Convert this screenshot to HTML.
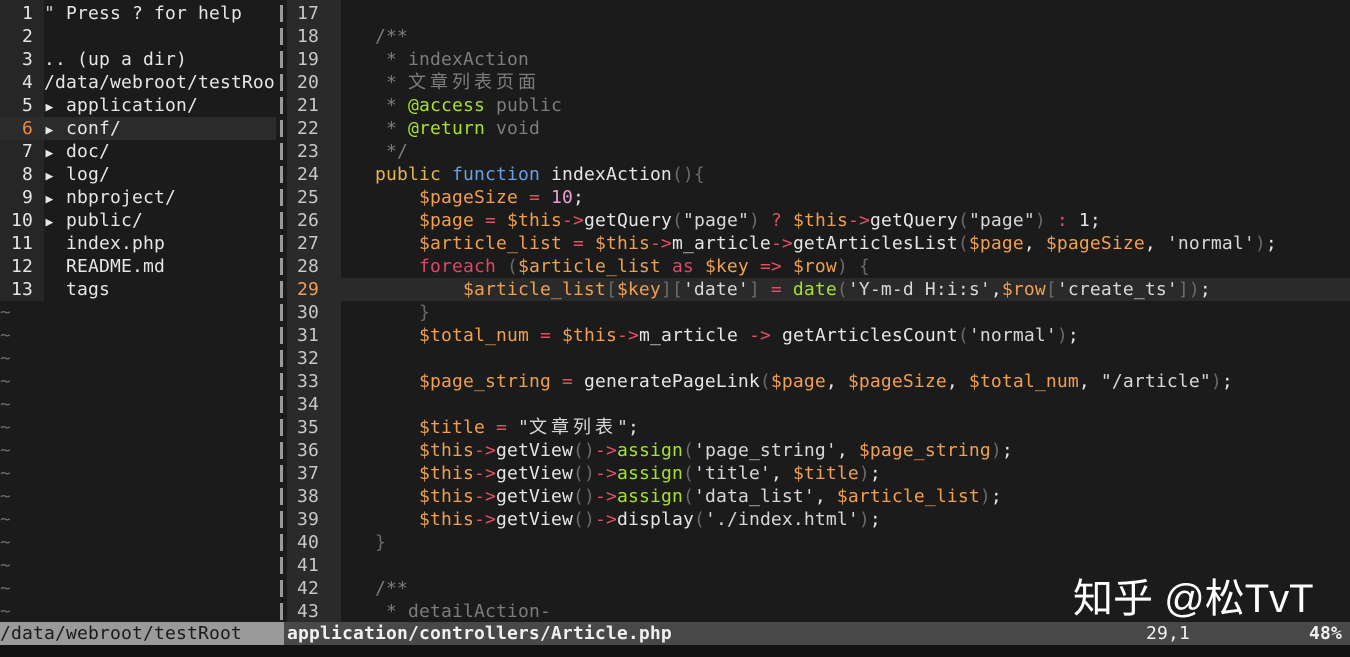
<!DOCTYPE html>
<html><head><meta charset="utf-8"><style>
html,body{margin:0;padding:0;background:#1b1b1b;width:1350px;height:657px;overflow:hidden}
body{font-family:"DejaVu Sans Mono","Liberation Mono","Noto Sans CJK SC",monospace;font-size:18px;letter-spacing:0.16px;color:#e6e6e6;position:relative}
.l{position:absolute;height:23px;line-height:23px;white-space:pre}
.lp{position:absolute;left:0;top:0;width:276px;height:622px;background:#1b1b1b}
.lg{position:absolute;left:0;top:0;width:44px;height:301px;background:#262626}
.sep{position:absolute;left:280px;top:0;width:3px;height:622px;}
.sep i{position:absolute;left:0;width:3px;height:17px;background:#9a9a9a}
.rg{position:absolute;left:287px;top:0;width:54px;height:622px;background:#2a2a2a}
.n{color:#c8c8c8;text-align:right}
.c{color:#7d7d7d}.g{color:#a6e22e}.o{color:#f0a050}.b{color:#66a0e8}.r{color:#e05060}.p{color:#6a6a6a}.s{color:#d8d8d8}.k{color:#e0456a}.y{color:#e6b450}
.cj{letter-spacing:4px}
.t{font-size:13px;display:inline-block;width:11px;text-align:center}
</style></head><body>
<div class="lp"></div><div class="lg"></div>
<div class="l" style="left:0;top:117px;width:276px;background:#2b2b2b"></div>
<div class="rg"></div>
<div class="l" style="left:330px;top:278px;width:1020px;background:#2a2a2a"></div>
<div class="sep">
<i style="top:5px"></i><i style="top:28px"></i><i style="top:51px"></i><i style="top:74px"></i><i style="top:97px"></i><i style="top:120px"></i><i style="top:143px"></i><i style="top:166px"></i><i style="top:189px"></i><i style="top:212px"></i><i style="top:235px"></i><i style="top:258px"></i><i style="top:281px"></i><i style="top:304px"></i><i style="top:327px"></i><i style="top:350px"></i><i style="top:373px"></i><i style="top:396px"></i><i style="top:419px"></i><i style="top:442px"></i><i style="top:465px"></i><i style="top:488px"></i><i style="top:511px"></i><i style="top:534px"></i><i style="top:557px"></i><i style="top:580px"></i><i style="top:603px"></i>
</div>
<!-- left pane -->
<div class="l" style="left:0;top:2px">  1 <span style="color:#ccc">"</span> Press ? for help</div>
<div class="l" style="left:0;top:25px">  2</div>
<div class="l" style="left:0;top:48px">  3 .. (up a dir)</div>
<div class="l" style="left:0;top:71px">  4 /data/webroot/testRoo</div>
<div class="l" style="left:0;top:94px">  5 <span class="t">▶</span> application/</div>
<div class="l" style="left:0;top:117px">  <span style="color:#f08a40">6</span> <span class="t">▶</span> conf/</div>
<div class="l" style="left:0;top:140px">  7 <span class="t">▶</span> doc/</div>
<div class="l" style="left:0;top:163px">  8 <span class="t">▶</span> log/</div>
<div class="l" style="left:0;top:186px">  9 <span class="t">▶</span> nbproject/</div>
<div class="l" style="left:0;top:209px"> 10 <span class="t">▶</span> public/</div>
<div class="l" style="left:0;top:232px"> 11   index.php</div>
<div class="l" style="left:0;top:255px"> 12   README.md</div>
<div class="l" style="left:0;top:278px"> 13   tags</div>
<div class="l p" style="left:0;top:301px;line-height:23px">~
~
~
~
~
~
~
~
~
~
~
~
~
~</div>
<!-- right pane numbers -->
<div class="l n" style="left:297px;top:2px;line-height:23px;text-align:left">17
18
19
20
21
22
23
24
25
26
27
28
<span style="color:#f0a050">29</span>
30
31
32
33
34
35
36
37
38
39
40
41
42
43</div>
<div class="l" style="left:342px;top:2px;line-height:23px">
   <span class="c">/**</span>
    <span class="c">* indexAction</span>
    <span class="c">* <span class="cj">文章列表页面</span></span>
    <span class="c">*</span> <span class="g">@access</span> <span class="c">public</span>
    <span class="c">*</span> <span class="g">@return</span> <span class="c">void</span>
    <span class="c">*/</span>
   <span class="y">public</span> <span class="b">function</span> indexAction<span class="p">(){</span>
       <span class="o">$pageSize</span> <span class="r">=</span> <span style="color:#e6a0d0">10</span>;
       <span class="o">$page</span> <span class="r">=</span> <span class="o">$this</span><span class="r">-&gt;</span>getQuery<span class="p">(</span><span class="s">"page"</span><span class="p">)</span> <span class="r">?</span> <span class="o">$this</span><span class="r">-&gt;</span>getQuery<span class="p">(</span><span class="s">"page"</span><span class="p">)</span> <span class="r">:</span> 1;
       <span class="o">$article_list</span> <span class="r">=</span> <span class="o">$this</span><span class="r">-&gt;</span>m_article<span class="r">-&gt;</span>getArticlesList<span class="p">(</span><span class="o">$page</span>, <span class="o">$pageSize</span>, <span class="s">'normal'</span><span class="p">)</span>;
       <span class="k">foreach</span> <span class="p">(</span><span class="o">$article_list</span> <span class="k">as</span> <span class="o">$key</span> <span class="r">=&gt;</span> <span class="o">$row</span><span class="p">)</span> <span class="p">{</span>
           <span class="o">$article_list</span><span class="p">[</span><span class="o">$key</span><span class="p">]</span><span class="p">[</span><span class="s">'date'</span><span class="p">]</span> <span class="r">=</span> <span class="g">date</span><span class="p">(</span><span class="s">'Y-m-d H:i:s'</span>,<span class="o">$row</span><span class="p">[</span><span class="s">'create_ts'</span><span class="p">])</span>;
       <span class="p">}</span>
       <span class="o">$total_num</span> <span class="r">=</span> <span class="o">$this</span><span class="r">-&gt;</span>m_article <span class="r">-&gt;</span> getArticlesCount<span class="p">(</span><span class="s">'normal'</span><span class="p">)</span>;

       <span class="o">$page_string</span> <span class="r">=</span> generatePageLink<span class="p">(</span><span class="o">$page</span>, <span class="o">$pageSize</span>, <span class="o">$total_num</span>, <span class="s">"/article"</span><span class="p">)</span>;

       <span class="o">$title</span> <span class="r">=</span> <span class="s">"<span class="cj">文章列表</span>"</span>;
       <span class="o">$this</span><span class="r">-&gt;</span>getView<span class="p">()</span><span class="r">-&gt;</span><span class="g">assign</span><span class="p">(</span><span class="s">'page_string'</span>, <span class="o">$page_string</span><span class="p">)</span>;
       <span class="o">$this</span><span class="r">-&gt;</span>getView<span class="p">()</span><span class="r">-&gt;</span><span class="g">assign</span><span class="p">(</span><span class="s">'title'</span>, <span class="o">$title</span><span class="p">)</span>;
       <span class="o">$this</span><span class="r">-&gt;</span>getView<span class="p">()</span><span class="r">-&gt;</span><span class="g">assign</span><span class="p">(</span><span class="s">'data_list'</span>, <span class="o">$article_list</span><span class="p">)</span>;
       <span class="o">$this</span><span class="r">-&gt;</span>getView<span class="p">()</span><span class="r">-&gt;</span>display<span class="p">(</span><span class="s">'./index.html'</span><span class="p">)</span>;
   <span class="p">}</span>

   <span class="c">/**</span>
    <span class="c">* detailAction-</span></div>
<!-- watermark -->
<div style="position:absolute;left:1073px;top:574px;font-family:'Liberation Sans','Noto Sans CJK SC',sans-serif;font-size:40px;color:#fff;letter-spacing:0px;line-height:50px;white-space:nowrap">知乎 @松TvT</div>
<!-- status -->
<div style="position:absolute;left:0;top:622px;width:1350px;height:23px;background:#484848"></div>
<div class="l" style="left:0;top:622px;width:284px;background:#9a9a9a;color:#1a1a1a">/data/webroot/testRoot</div>
<div class="l" style="left:287px;top:622px;color:#f0f0f0;font-weight:bold">application/controllers/Article.php</div>
<div class="l" style="left:1146px;top:622px;color:#f0f0f0">29,1</div>
<div class="l" style="left:1309px;top:622px;color:#f0f0f0;font-weight:bold">48%</div>
<div style="position:absolute;left:0;top:645px;width:1350px;height:12px;background:#121212"></div>
</body></html>
